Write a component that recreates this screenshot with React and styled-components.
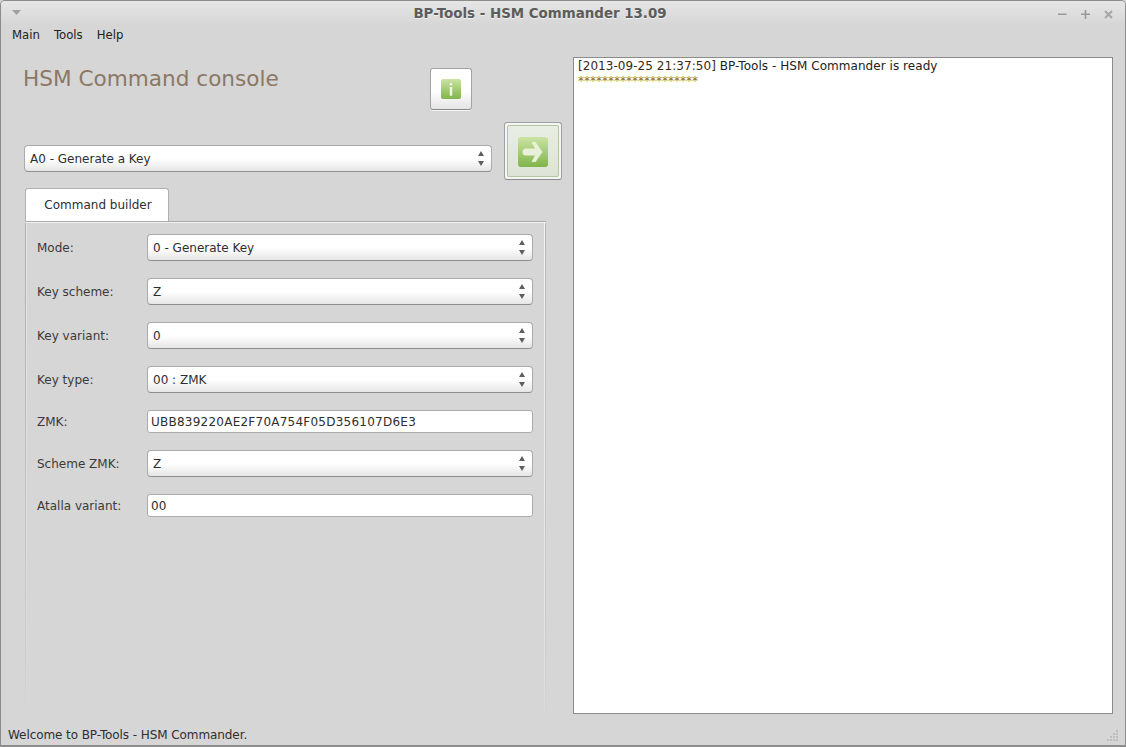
import React from "react"
import styled, { createGlobalStyle } from "styled-components"

const GlobalStyle = createGlobalStyle`
  html, body { margin: 0; padding: 0; background: #d6d6d6; }
  body { font-family: "DejaVu Sans", sans-serif; font-size: 12px; color: #2e2e2e; }
`

const Window = styled.div`
  box-sizing: border-box;
  width: 1126px;
  height: 747px;
  display: flex;
  flex-direction: column;
  background: #d6d6d6;
  border: 1px solid #8c8c8c;
  border-bottom-width: 2px;
  border-radius: 5px 5px 0 0;
  overflow: hidden;
`

const TitleBar = styled.div`
  height: 24px;
  flex: none;
  display: flex;
  align-items: center;
  justify-content: space-between;
  padding: 0 12px 0 11px;
  background: linear-gradient(#e6e6e6, #d6d6d6);
  position: relative;
`

const Title = styled.div`
  position: absolute;
  left: 0;
  right: 46px;
  text-align: center;
  font-size: 13.4px;
  font-weight: bold;
  color: #5c5c5c;
  text-shadow: 0 1px 0 #f0f0f0;
`

const WindowControls = styled.div`
  display: flex;
  gap: 14px;
  align-items: center;
  padding-top: 2px;
`

const MenuBar = styled.div`
  height: 20px;
  flex: none;
  display: flex;
  gap: 14px;
  align-items: center;
  padding-left: 11px;
  font-size: 11.7px;
  color: #222;
`

const Main = styled.div`
  flex: 1;
  min-height: 0;
  display: flex;
  padding-top: 12px;
`

const LeftPane = styled.div`
  width: 572px;
  flex: none;
  display: flex;
  flex-direction: column;
`

const HeaderRow = styled.div`
  display: flex;
  padding: 11px 0 0 22px;
`

const Heading = styled.h1`
  margin: 0;
  width: 407px;
  padding-top: 1px;
  font-size: 21.6px;
  line-height: 20px;
  font-weight: normal;
  color: #8b7865;
`

const IconButton = styled.div`
  box-sizing: border-box;
  width: 42px;
  height: 42px;
  display: flex;
  align-items: center;
  justify-content: center;
  border: 1px solid #a3a3a3;
  border-bottom-color: #8a8a8a;
  border-radius: 3px;
  background: linear-gradient(#fff 55%, #e4e4e4);
  box-shadow: 0 1px 0 #f4f4f4;
`

const CommandRow = styled.div`
  display: flex;
  gap: 12px;
  padding: 12px 0 0 23px;
  margin-bottom: 8px;
`

const CommandSelect = styled.div`
  margin-top: 23px;
  flex: none;
  width: 468px;
`

const RunButton = styled.div`
  box-sizing: border-box;
  width: 58px;
  height: 58px;
  display: flex;
  align-items: center;
  justify-content: center;
  border: 1px solid #a0a0a0;
  border-bottom-color: #8a8a8a;
  border-radius: 3px;
  background: #f5f5f5;
  padding: 2px;
`

const RunInner = styled.div`
  box-sizing: border-box;
  width: 100%;
  height: 100%;
  display: flex;
  align-items: center;
  justify-content: center;
  padding-top: 1px;
  border: 1px solid #b3c6a0;
  border-radius: 2px;
  background: linear-gradient(#e9eee4, #dde3d6);
`

const SelectBox = styled.div`
  box-sizing: border-box;
  height: 27px;
  display: flex;
  align-items: center;
  justify-content: space-between;
  padding: 0 7px 0 5px;
  border: 1px solid #ababab;
  border-bottom-color: #8f8f8f;
  border-radius: 4px;
  background: linear-gradient(#fff 50%, #e6e6e6);
  color: #2e2e2e;
`

const Spinner = styled.div`
  display: flex;
  flex-direction: column;
  gap: 5px;
`

const ArrowUp = styled.div`
  width: 0;
  height: 0;
  border-left: 3px solid transparent;
  border-right: 3px solid transparent;
  border-bottom: 5px solid #5e5e5e;
`

const ArrowDown = styled(ArrowUp)`
  border-bottom: 0;
  border-top: 5px solid #5e5e5e;
`

const TabStrip = styled.div`
  display: flex;
  padding-left: 24px;
`

const Tab = styled.div`
  box-sizing: border-box;
  width: 144px;
  height: 33px;
  display: flex;
  align-items: center;
  justify-content: center;
  padding-left: 2px;
  border: 1px solid #b0b0b0;
  border-bottom: 0;
  border-radius: 3px 3px 0 0;
  background: #fff;
  color: #2e2e2e;
`

const TabPanel = styled.div`
  box-sizing: border-box;
  width: 521px;
  margin-left: 24px;
  flex: 1;
  min-height: 0;
  display: flex;
  flex-direction: column;
  gap: 17px;
  padding: 13px 13px 0 12px;
  background:
    linear-gradient(#adadad, #cfcfcf 90%, #d6d6d6) 0 0 / 1px 100% no-repeat,
    linear-gradient(#e6e6e6, #d9d9d9 90%, #d6d6d6) 1px 0 / 1px 100% no-repeat,
    linear-gradient(#f4f4f4, #e0e0e0 90%, #d6d6d6) calc(100% - 1px) 0 / 1px 100% no-repeat,
    linear-gradient(#b4b4b4, #cfcfcf 90%, #d6d6d6) 100% 0 / 1px 100% no-repeat;
  box-shadow: inset 0 1px 0 #a9a9a9, inset 0 2px 0 #f2f2f2;
`

const FormRow = styled.div`
  display: flex;
  align-items: center;
`

const FieldLabel = styled.div`
  width: 110px;
  flex: none;
  color: #3a3a3a;
`

const FieldControl = styled.div`
  flex: 1;
`

const TextField = styled.input`
  box-sizing: border-box;
  display: block;
  width: 100%;
  height: 23px;
  padding: 0 3px;
  border: 1px solid #ababab;
  border-radius: 3px;
  background: #fff;
  outline: none;
  font: inherit;
  letter-spacing: 0.24px;
  color: #2e2e2e;
`

const LogPane = styled.div`
  box-sizing: border-box;
  width: 540px;
  flex: none;
  height: 657px;
  padding: 1px 4px 0;
  border: 1px solid #8c8c8c;
  background: #fff;
  line-height: 15px;
  letter-spacing: 0.05px;
  color: #222;
`

const LogStamp = styled.span`
  color: #3a2a18;
`

const LogStars = styled.div`
  color: #8f6f2f;
  line-height: 14px;
  letter-spacing: 0;
`

const StatusBar = styled.div`
  flex: none;
  height: 21px;
  display: flex;
  align-items: center;
  justify-content: space-between;
  padding: 0 6px 0 7px;
  box-sizing: border-box;
  letter-spacing: -0.08px;
  color: #2e2e2e;
`

const Select = ({ children }) => (
  <SelectBox>
    <span>{children}</span>
    <Spinner><ArrowUp /><ArrowDown /></Spinner>
  </SelectBox>
)

const GreenTile = ({ size, id, children }) => (
  <svg width={size} height={size} viewBox="0 0 30 30">
    <defs>
      <linearGradient id={id} x1="0" y1="0" x2="0" y2="1">
        <stop offset="0" stopColor="#cbe3a4" />
        <stop offset="1" stopColor="#7fb54a" />
      </linearGradient>
    </defs>
    <rect width="30" height="30" rx="3" fill={`url(#${id})`} />
    {children}
  </svg>
)

const fields = [
  { label: "Mode:", value: "0 - Generate Key", kind: "select" },
  { label: "Key scheme:", value: "Z", kind: "select" },
  { label: "Key variant:", value: "0", kind: "select" },
  { label: "Key type:", value: "00 : ZMK", kind: "select" },
  { label: "ZMK:", value: "UBB839220AE2F70A754F05D356107D6E3", kind: "input" },
  { label: "Scheme ZMK:", value: "Z", kind: "select" },
  { label: "Atalla variant:", value: "00", kind: "input" },
]

const App = () => {
  return (
    <Window>
      <GlobalStyle />
      <TitleBar>
        <svg width="9" height="6" viewBox="0 0 9 6"><path d="M0 0h9L4.500 5z" fill="#a0a0a0" /></svg>
        <Title>BP-Tools - HSM Commander 13.09</Title>
        <WindowControls>
          <svg width="9" height="9" viewBox="0 0 9 9"><path d="M0 3.500h8.500V5H0z" fill="#9a9a9a" /></svg>
          <svg width="9" height="9" viewBox="0 0 9 9"><path d="M0 3.500h9V5H0zM3.700 0h1.600v9H3.700z" fill="#9a9a9a" /></svg>
          <svg width="9" height="9" viewBox="0 0 9 9"><path d="M1 1l7 7M8 1L1 8" stroke="#a6a6a6" strokeWidth="2" /></svg>
        </WindowControls>
      </TitleBar>
      <MenuBar>
        <span>Main</span>
        <span>Tools</span>
        <span>Help</span>
      </MenuBar>
      <Main>
        <LeftPane>
          <HeaderRow>
            <Heading>HSM Command console</Heading>
            <IconButton>
              <GreenTile size={20} id="infoTile">
                <path d="M13.200 6h3.600v3.500h-3.600zM13.200 12h3.600v13h-3.600z" fill="#f2f7ea" />
              </GreenTile>
            </IconButton>
          </HeaderRow>
          <CommandRow>
            <CommandSelect>
              <Select>A0 - Generate a Key</Select>
            </CommandSelect>
            <RunButton>
              <RunInner>
                <GreenTile size={30} id="runTile">
                  <path d="M13.500 5h4l7 10-7 10h-4l3.500-6.500H8a3.500 3.500 0 0 1 0-7h9z" fill="#e8f0da" />
                </GreenTile>
              </RunInner>
            </RunButton>
          </CommandRow>
          <TabStrip>
            <Tab>Command builder</Tab>
          </TabStrip>
          <TabPanel>
            {fields.map(f => (
              <FormRow key={f.label}>
                <FieldLabel>{f.label}</FieldLabel>
                <FieldControl>
                  {f.kind === "select"
                    ? <Select>{f.value}</Select>
                    : <TextField readOnly value={f.value} />}
                </FieldControl>
              </FormRow>
            ))}
          </TabPanel>
        </LeftPane>
        <LogPane>
          <div><LogStamp>[2013-09-25 21:37:50]</LogStamp> BP-Tools - HSM Commander is ready</div>
          <LogStars>********************</LogStars>
        </LogPane>
      </Main>
      <StatusBar>
        <span>Welcome to BP-Tools - HSM Commander.</span>
        <svg width="12" height="12" viewBox="0 0 12 12" fill="#bdbdbd">
          <rect x="9" y="1" width="2" height="2" />
          <rect x="6" y="4" width="2" height="2" /><rect x="9" y="4" width="2" height="2" />
          <rect x="3" y="7" width="2" height="2" /><rect x="6" y="7" width="2" height="2" /><rect x="9" y="7" width="2" height="2" />
          <rect x="0" y="10" width="2" height="2" /><rect x="3" y="10" width="2" height="2" /><rect x="6" y="10" width="2" height="2" /><rect x="9" y="10" width="2" height="2" />
        </svg>
      </StatusBar>
    </Window>
  )
}

export default App
